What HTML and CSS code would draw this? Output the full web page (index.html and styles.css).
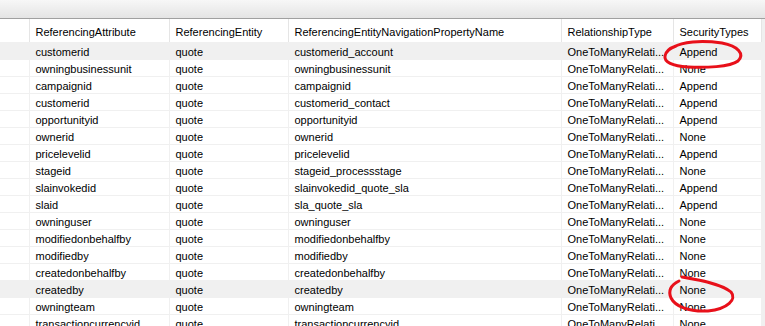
FILE: index.html
```html
<!DOCTYPE html>
<html lang="en">
<head>
    <meta charset="UTF-8">
    <title>Results</title>
    <link rel="stylesheet" href="styles.css">
</head>
<body>
    <div class="toolbar"></div>
    <div class="grid-wrap">
        <table class="grid">
            <colgroup>
                <col class="c-num">
                <col class="c-attr">
                <col class="c-ent">
                <col class="c-nav">
                <col class="c-rel">
                <col class="c-sec">
            </colgroup>
            <thead>
                <tr>
                    <th></th>
                    <th>ReferencingAttribute</th>
                    <th>ReferencingEntity</th>
                    <th>ReferencingEntityNavigationPropertyName</th>
                    <th>RelationshipType</th>
                    <th>SecurityTypes</th>
                </tr>
            </thead>
            <tbody>
                <tr class="sel"><td></td><td>customerid</td><td>quote</td><td>customerid_account</td><td>OneToManyRelati...</td><td>Append</td></tr>
                <tr><td></td><td>owningbusinessunit</td><td>quote</td><td>owningbusinessunit</td><td>OneToManyRelati...</td><td>None</td></tr>
                <tr><td></td><td>campaignid</td><td>quote</td><td>campaignid</td><td>OneToManyRelati...</td><td>Append</td></tr>
                <tr><td></td><td>customerid</td><td>quote</td><td>customerid_contact</td><td>OneToManyRelati...</td><td>Append</td></tr>
                <tr><td></td><td>opportunityid</td><td>quote</td><td>opportunityid</td><td>OneToManyRelati...</td><td>Append</td></tr>
                <tr><td></td><td>ownerid</td><td>quote</td><td>ownerid</td><td>OneToManyRelati...</td><td>None</td></tr>
                <tr><td></td><td>pricelevelid</td><td>quote</td><td>pricelevelid</td><td>OneToManyRelati...</td><td>Append</td></tr>
                <tr><td></td><td>stageid</td><td>quote</td><td>stageid_processstage</td><td>OneToManyRelati...</td><td>None</td></tr>
                <tr><td></td><td>slainvokedid</td><td>quote</td><td>slainvokedid_quote_sla</td><td>OneToManyRelati...</td><td>Append</td></tr>
                <tr><td></td><td>slaid</td><td>quote</td><td>sla_quote_sla</td><td>OneToManyRelati...</td><td>Append</td></tr>
                <tr><td></td><td>owninguser</td><td>quote</td><td>owninguser</td><td>OneToManyRelati...</td><td>None</td></tr>
                <tr><td></td><td>modifiedonbehalfby</td><td>quote</td><td>modifiedonbehalfby</td><td>OneToManyRelati...</td><td>None</td></tr>
                <tr><td></td><td>modifiedby</td><td>quote</td><td>modifiedby</td><td>OneToManyRelati...</td><td>None</td></tr>
                <tr><td></td><td>createdonbehalfby</td><td>quote</td><td>createdonbehalfby</td><td>OneToManyRelati...</td><td>None</td></tr>
                <tr class="sel"><td></td><td>createdby</td><td>quote</td><td>createdby</td><td>OneToManyRelati...</td><td>None</td></tr>
                <tr><td></td><td>owningteam</td><td>quote</td><td>owningteam</td><td>OneToManyRelati...</td><td>None</td></tr>
                <tr><td></td><td>transactioncurrencyid</td><td>quote</td><td>transactioncurrencyid</td><td>OneToManyRelati...</td><td>None</td></tr>
            </tbody>
        </table>

        <!-- hand-drawn red circles -->
        <svg class="marks" width="765" height="326" viewBox="0 0 765 326">
            <path d="M674 47 C682 42 700 40 722 43 C738 46 745 54 738 61 C730 67 705 68 688 67 C672 66 664 62 665 56 C666 51 670 48 676 46" />
            <path d="M682 277 C700 280 722 284 731 292 C737 299 728 309 708 311 C688 312 675 306 671 298 C668 291 671 285 679 281" />
        </svg>
    </div>
</body>
</html>
```

FILE: styles.css
```css
body {
    margin: 0;
    padding: 0;
    width: 765px;
    height: 326px;
    overflow: hidden;
    background: #f0f0f0;
    font-family: 'Liberation Sans', Arial, sans-serif;
    font-size: 11px;
    color: #000;
}

.toolbar {
    height: 18px;
    background: linear-gradient(#f7f7f7, #e4e4e4);
    border-bottom: 1px solid #a0a0a0;
}

.grid-wrap {
    position: relative;
}

.grid {
    border-collapse: collapse;
    table-layout: fixed;
    width: 733px;
    background: #fff;
}

.c-num { width: 29px; }
.c-attr { width: 140px; }
.c-ent { width: 119px; }
.c-nav { width: 273px; }
.c-rel { width: 112px; }
.c-sec { width: 88px; }

.grid th {
    height: 21px;
    padding: 2px 0 0 6px;
    font-weight: normal;
    text-align: left;
    border-right: 1px solid #e5e5e5;
    border-bottom: 1px solid #f0f0f0;
    white-space: nowrap;
    overflow: hidden;
}

.grid td {
    height: 14px;
    padding: 2px 0 0 6px;
    border-right: 1px solid #f0f0f0;
    border-bottom: 1px solid #f0f0f0;
    white-space: nowrap;
    overflow: hidden;
}

.grid tr.sel td {
    background: #f0f0f0;
}

.marks {
    position: absolute;
    left: 0;
    top: -19px;
    pointer-events: none;
}

.marks path {
    fill: none;
    stroke: #e8101a;
    stroke-width: 3;
    stroke-linecap: round;
}
```
